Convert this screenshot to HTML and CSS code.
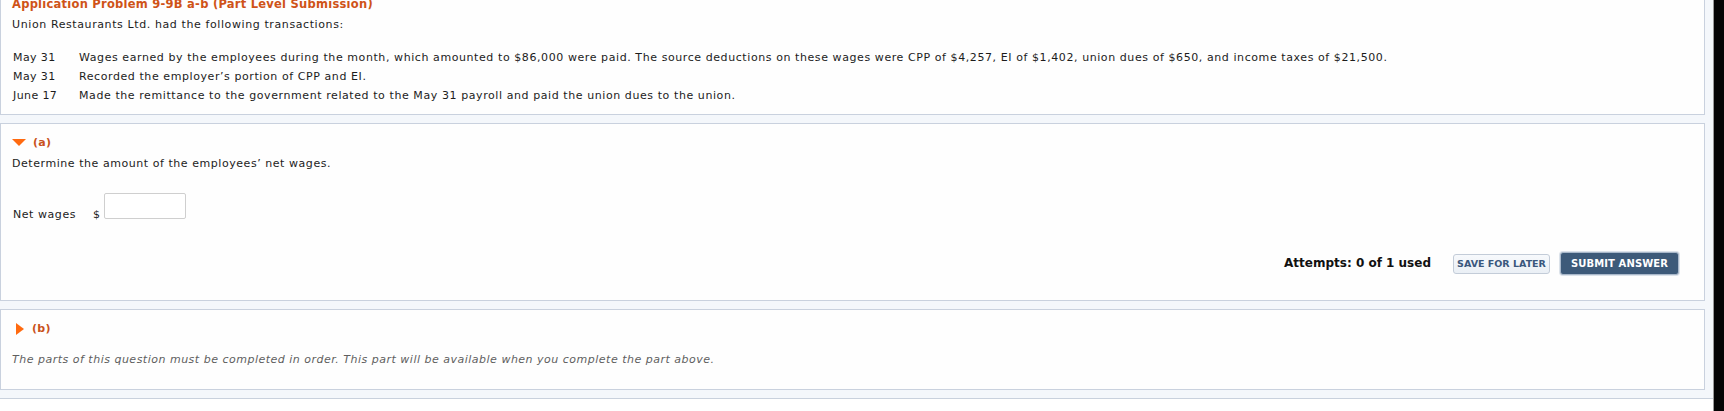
FILE: index.html
```html
<!DOCTYPE html>
<html>
<head>
<meta charset="utf-8">
<link rel="stylesheet" href="styles.css">
</head>
<body>
<div class="screen">
  <div class="main">
    <div class="panel intro">
      <div class="title">Application Problem 9-9B a-b (Part Level Submission)</div>
      <div class="lead">Union Restaurants Ltd. had the following transactions:</div>
      <table class="tx">
        <tr><td class="date">May 31</td><td>Wages earned by the employees during the month, which amounted to $86,000 were paid. The source deductions on these wages were CPP of $4,257, EI of $1,402, union dues of $650, and income taxes of $21,500.</td></tr>
        <tr><td class="date">May 31</td><td>Recorded the employer’s portion of CPP and EI.</td></tr>
        <tr><td class="date">June 17</td><td>Made the remittance to the government related to the May 31 payroll and paid the union dues to the union.</td></tr>
      </table>
    </div>

    <div class="panel part-a">
      <div class="part-head">
        <svg class="tri-down" width="14" height="7" viewBox="0 0 14 7"><polygon points="0,0 14,0 7,7" fill="#ff6a10"/></svg>
        <span class="part-label">(a)</span>
      </div>
      <div class="question">Determine the amount of the employees’ net wages.</div>
      <div class="answer-row">
        <span class="answer-label">Net wages</span>
        <span class="dollar">$</span>
        <input class="answer-input" type="text">
      </div>
      <div class="actions">
        <span class="attempts">Attempts: 0 of 1 used</span>
        <button class="btn btn-save">SAVE FOR LATER</button>
        <button class="btn btn-submit">SUBMIT ANSWER</button>
      </div>
    </div>

    <div class="panel part-b">
      <div class="part-head">
        <svg class="tri-right" width="8" height="12" viewBox="0 0 8 12"><polygon points="0,0 8,6 0,12" fill="#ff6a10"/></svg>
        <span class="part-label">(b)</span>
      </div>
      <div class="locked">The parts of this question must be completed in order. This part will be available when you complete the part above.</div>
    </div>
  </div>
  <div class="edge"></div>
</div>
</body>
</html>
```

FILE: styles.css
```css
html, body {
  margin: 0;
  padding: 0;
  background: #ffffff;
  height: 100%;
  overflow: hidden;
}

body {
  font-family: "DejaVu Sans", Verdana, sans-serif;
  font-size: 11px;
  line-height: 19px;
  letter-spacing: 0.55px;
  color: #1c1c1c;
}

.screen {
  display: flex;
  height: 411px;
}

.main {
  width: 1713px;
  align-self: flex-start;
  background: #f4f7fb;
  border-bottom: 1px solid #c9d1dd;
  margin-top: -6px;
  padding-bottom: 8px;
}

.edge {
  width: 10px;
  border-left: 1px solid #9a9a9a;
  background: #050505;
}

.panel {
  background: #fefefe;
  border: 1px solid #c9d1de;
  margin-right: 8px;
  padding: 0 11px;
}

.panel + .panel {
  margin-top: 8px;
}

.intro {
  padding-top: 0;
  padding-bottom: 9px;
}

.title {
  font-weight: bold;
  font-size: 11.5px;
  letter-spacing: 0.25px;
  color: #cf5318;
}

.lead {
  margin-top: 1px;
  letter-spacing: 0.6px;
}

.tx {
  border-collapse: collapse;
  margin-top: 14px;
}

.tx td {
  padding: 0;
  vertical-align: top;
  line-height: 19px;
  letter-spacing: 0.58px;
}

.tx td.date {
  width: 66px;
  padding-left: 1px;
  letter-spacing: 0.4px;
}

.part-a {
  padding-top: 9px;
  padding-bottom: 25px;
}

.part-head {
  display: flex;
  align-items: center;
  height: 19px;
}

.tri-down {
  display: block;
  margin-right: 7px;
}

.tri-right {
  display: block;
  margin-left: 4px;
  margin-right: 8px;
}

.part-label {
  font-weight: bold;
  color: #c9521c;
  letter-spacing: 0.3px;
}

.question {
  margin-top: 2px;
}

.answer-row {
  display: flex;
  align-items: flex-end;
  margin-top: 20px;
}

.answer-label {
  line-height: 13px;
  margin-bottom: -2px;
  padding-left: 1px;
  width: 80px;
}

.dollar {
  line-height: 13px;
  margin-bottom: -2px;
  width: 11px;
}

.answer-input {
  box-sizing: border-box;
  width: 82px;
  height: 26px;
  margin: 0;
  border: 1px solid #cfcfcf;
  border-radius: 2px;
  background: #ffffff;
  padding: 2px 4px;
  font: inherit;
}

.actions {
  display: flex;
  align-items: center;
  justify-content: flex-end;
  margin-top: 33px;
  padding-right: 14px;
}

.attempts {
  font-weight: bold;
  font-size: 12px;
  letter-spacing: 0;
  color: #111111;
  margin-right: 22px;
}

.btn {
  box-sizing: border-box;
  font-family: "DejaVu Sans", Verdana, sans-serif;
  font-weight: bold;
  font-size: 9.5px;
  letter-spacing: 0;
  border-radius: 3px;
  padding: 0;
  margin: 0;
  cursor: pointer;
}

.btn-save {
  width: 97px;
  height: 20px;
  background: linear-gradient(#f7f9fc, #eaeff5);
  border: 1px solid #c3ccd8;
  color: #3a577d;
  margin-right: 10px;
}

.btn-submit {
  width: 119px;
  height: 23px;
  background: #3d5a79;
  border: 1px solid #a9b8ca;
  box-shadow: 0 0 0 1px #dbe2ea;
  color: #ffffff;
  font-size: 10px;
  letter-spacing: 0.1px;
}

.part-b {
  padding-top: 9px;
  padding-bottom: 20px;
}

.locked {
  margin-top: 12px;
  font-style: italic;
  color: #5f5f5f;
  letter-spacing: 0.5px;
}
```
